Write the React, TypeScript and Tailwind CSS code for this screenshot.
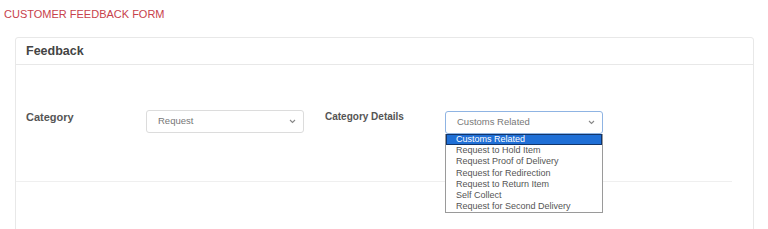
import React from 'react';

const details = [
  'Customs Related',
  'Request to Hold Item',
  'Request Proof of Delivery',
  'Request for Redirection',
  'Request to Return Item',
  'Self Collect',
  'Request for Second Delivery',
];

const Chevron: React.FC = () => (
  <svg width="7" height="5" viewBox="0 0 7 5" className="shrink-0">
    <path d="M1 1 L3.5 3.5 L6 1" fill="none" stroke="#888" strokeWidth="1.1" />
  </svg>
);

const App: React.FC = () => {
  return (
    <div className="w-[768px] h-[229px] overflow-hidden bg-white font-['Liberation_Sans',Arial,sans-serif]">
      <div className="pl-[4px] pt-[8px] text-[11px] leading-[13px] text-[#c8414b]">CUSTOMER FEEDBACK FORM</div>

      <div className="mt-[16px] ml-[15px] w-[739px] h-[200px] border border-[#e8e8e8] rounded-[3px]">
        <div className="h-[27px] border-b border-[#e8e8e8] px-[10px] flex items-center">
          <span className="text-[12.5px] font-bold text-[#444]">Feedback</span>
        </div>

        <div className="pt-[45px]">
          <div className="flex items-start pl-[10px]">
            <div className="w-[120px] -mt-[1px] text-[11px] font-bold text-[#555]">Category</div>
            <div className="w-[158px] h-[23px] border border-[#dcdcdc] rounded-[3px] flex items-center justify-between pl-[11px] pr-[7px] text-[9.5px] text-[#777]">
              <span>Request</span>
              <Chevron />
            </div>
            <div className="ml-[21px] w-[120px] -mt-[1px] text-[10px] font-bold text-[#555]">Category Details</div>
            <div className="relative w-[158px] mt-[1px]">
              <div className="h-[23px] border border-[#8fb4e3] rounded-[3px] flex items-center justify-between pl-[11px] pr-[7px] text-[9.5px] text-[#777]">
                <span>Customs Related</span>
                <Chevron />
              </div>
              <div className="absolute top-full left-0 w-full bg-white border border-[#9a9a9a] border-t-0 z-10">
                {details.map((d, i) => (
                  <div
                    key={d}
                    className={
                      i === 0
                        ? 'h-[11.2px] leading-[11px] pl-[10px] text-[9px] text-white bg-[#1f6fd6] outline outline-1 outline-[#12356a] -outline-offset-1'
                        : 'h-[11.2px] leading-[11px] pl-[10px] text-[9px] text-[#555]'
                    }
                  >
                    {d}
                  </div>
                ))}
              </div>
            </div>
          </div>

          <div className="mt-[47px] mr-[21px] border-t border-[#efefef]" />
        </div>
      </div>
    </div>
  );
};

export default App;
